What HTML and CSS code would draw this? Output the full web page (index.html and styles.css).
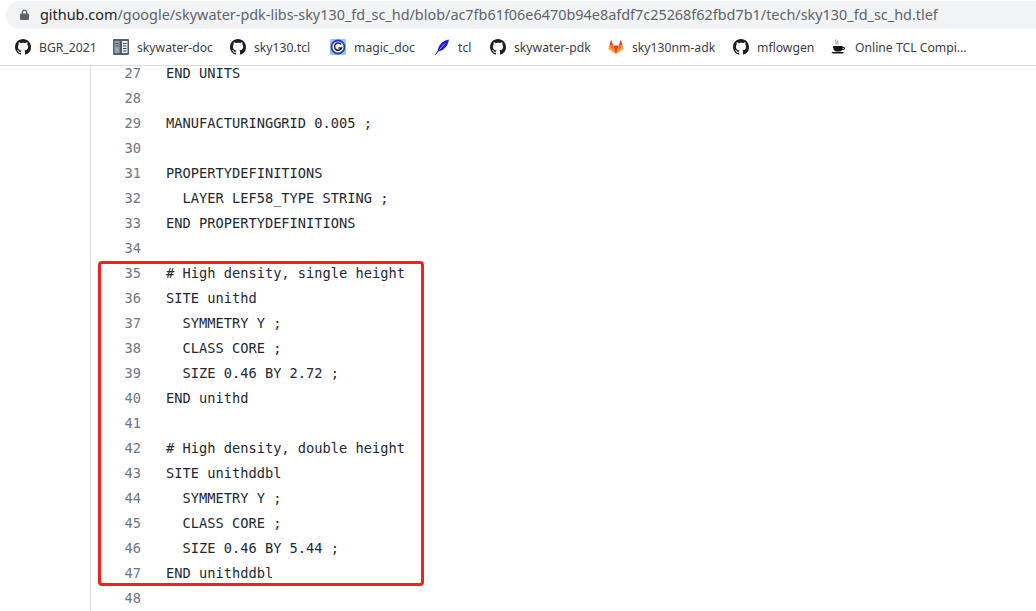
FILE: index.html
```html
<!DOCTYPE html>
<html lang="en">
<head>
<meta charset="utf-8">
<title>sky130_fd_sc_hd.tlef</title>
<link rel="stylesheet" href="styles.css">
</head>
<body>
<svg class="defs" width="0" height="0" aria-hidden="true"><defs>
<symbol id="gh" viewBox="0 0 16 16"><path fill="#1b1f23" d="M8 0C3.58 0 0 3.58 0 8c0 3.54 2.29 6.53 5.47 7.59.4.07.55-.17.55-.38 0-.19-.01-.82-.01-1.49-2.01.37-2.53-.49-2.69-.94-.09-.23-.48-.94-.82-1.13-.28-.15-.68-.52-.01-.53.63-.01 1.08.58 1.23.82.72 1.21 1.87.87 2.33.66.07-.52.28-.87.51-1.07-1.78-.2-3.64-.89-3.64-3.95 0-.87.31-1.59.82-2.15-.08-.2-.36-1.02.08-2.12 0 0 .67-.21 2.2.82.64-.18 1.32-.27 2-.27s1.36.09 2 .27c1.53-1.04 2.2-.82 2.2-.82.44 1.1.16 1.92.08 2.12.51.56.82 1.27.82 2.15 0 3.07-1.87 3.75-3.65 3.95.29.25.54.73.54 1.48 0 1.07-.01 1.93-.01 2.2 0 .21.15.46.55.38A8.01 8.01 0 0 0 16 8c0-4.42-3.58-8-8-8z"/></symbol>
</defs></svg>
<header class="chrome">
  <div class="omnibox">
    <svg class="lock" viewBox="0 0 10 12"><path fill="#5f6368" d="M2 5V3.4a3 3 0 0 1 6 0V5h1a1 1 0 0 1 1 1v5a1 1 0 0 1-1 1H1a1 1 0 0 1-1-1V6a1 1 0 0 1 1-1zm1.300 0h3.400V3.400a1.700 1.700 0 0 0-3.400 0z"/></svg>
    <span class="url"><span class="host">github.com</span>/google/skywater-pdk-libs-sky130_fd_sc_hd/blob/ac7fb61f06e6470b94e8afdf7c25268f62fbd7b1/tech/sky130_fd_sc_hd.tlef</span>
  </div>
  <nav class="bookmarks">
    <a class="mark m-bgr"><svg class="ico"><use href="#gh"/></svg>BGR_2021</a>
    <a class="mark m-doc"><svg class="ico" viewBox="0 0 16 16"><rect width="16" height="16" rx="1" fill="#4f5f6c"/><rect x="1.500" y="2" width="5" height="12" fill="#93a5b3"/><rect x="9" y="2" width="5.500" height="12" fill="#eef1f3"/><path d="M10 4.500h3.500M10 7h3.500M10 9.500h3.500M10 12h3.500M2.500 4.500h3M2.500 7h3" stroke="#3b4853" stroke-width="1.100"/></svg>skywater-doc</a>
    <a class="mark m-tcl"><svg class="ico"><use href="#gh"/></svg>sky130.tcl</a>
    <a class="mark m-magic"><svg class="ico" viewBox="0 0 16 16"><rect width="16" height="16" rx="1" fill="#9fc3e8"/><circle cx="8" cy="8" r="6.500" fill="#f4f4f4" stroke="#1c3fc4" stroke-width="1.800"/><path d="M11 5.500A3.600 3.600 0 1 0 11.500 9H8.500" fill="none" stroke="#222" stroke-width="1.500"/></svg>magic_doc</a>
    <a class="mark m-feather"><svg class="ico" viewBox="0 0 16 16"><path fill="#1a1ae0" d="M15 .5c-4 .5-7.500 2.500-9.500 6-1 1.800-1.500 3.500-1.700 5L1 15.500l.7.500 2.900-3.700c1.700-.2 3.600-.9 5.200-2.300C12.800 7.500 14.500 4 15 .5z"/><path d="M5.500 10.500 11 4.500" stroke="#fff" stroke-width=".6"/></svg>tcl</a>
    <a class="mark m-pdk"><svg class="ico"><use href="#gh"/></svg>skywater-pdk</a>
    <a class="mark m-adk"><svg class="ico" viewBox="0 0 16 16"><path fill="#e24329" d="M8 15.200 5.200 6.500h5.600z"/><path fill="#fc6d26" d="M8 15.200 5.200 6.500H1.300zM8 15.200l2.800-8.700h3.900z"/><path fill="#fca326" d="M1.300 6.500.4 9.300c-.1.300 0 .5.200.7L8 15.200zM14.700 6.500l.9 2.800c.1.300 0 .5-.2.700L8 15.200z"/><path fill="#e24329" d="M1.300 6.500h3.900L3.500 1.300c-.1-.3-.5-.3-.6 0zM14.700 6.500h-3.900l1.700-5.200c.1-.3.500-.3.600 0z"/></svg>sky130nm-adk</a>
    <a class="mark m-flow"><svg class="ico"><use href="#gh"/></svg>mflowgen</a>
    <a class="mark m-online"><svg class="ico" viewBox="0 0 16 16"><path d="M5 .5c-1.500 1.500 1 2.500-.3 5M7 1.500c-1 1 .6 2-.2 4" fill="none" stroke="#777" stroke-width=".9"/><path fill="#111" d="M2 7h9.500v1h1.300c1.700 0 1.700 3-.3 3h-1.500c-.7 1-1.500 1.500-2.400 1.500H5.500C3.500 12.500 2 10 2 7zM11.500 9v1h1c.6 0 .6-1 0-1z"/><path fill="#111" d="M.5 13H13c-.5 1-1.500 1.500-2.500 1.500H3C2 14.500 1 14 .5 13z"/></svg>Online TCL Compi...</a>
  </nav>
</header>
<main class="page">
  <div class="blob">
    <div class="lines">
      <div class="row"><span class="num">27</span><span class="code">END UNITS</span></div>
      <div class="row"><span class="num">28</span><span class="code"></span></div>
      <div class="row"><span class="num">29</span><span class="code">MANUFACTURINGGRID 0.005 ;</span></div>
      <div class="row"><span class="num">30</span><span class="code"></span></div>
      <div class="row"><span class="num">31</span><span class="code">PROPERTYDEFINITIONS</span></div>
      <div class="row"><span class="num">32</span><span class="code">  LAYER LEF58_TYPE STRING ;</span></div>
      <div class="row"><span class="num">33</span><span class="code">END PROPERTYDEFINITIONS</span></div>
      <div class="row"><span class="num">34</span><span class="code"></span></div>
      <div class="row"><span class="num">35</span><span class="code"># High density, single height</span></div>
      <div class="row"><span class="num">36</span><span class="code">SITE unithd</span></div>
      <div class="row"><span class="num">37</span><span class="code">  SYMMETRY Y ;</span></div>
      <div class="row"><span class="num">38</span><span class="code">  CLASS CORE ;</span></div>
      <div class="row"><span class="num">39</span><span class="code">  SIZE 0.46 BY 2.72 ;</span></div>
      <div class="row"><span class="num">40</span><span class="code">END unithd</span></div>
      <div class="row"><span class="num">41</span><span class="code"></span></div>
      <div class="row"><span class="num">42</span><span class="code"># High density, double height</span></div>
      <div class="row"><span class="num">43</span><span class="code">SITE unithddbl</span></div>
      <div class="row"><span class="num">44</span><span class="code">  SYMMETRY Y ;</span></div>
      <div class="row"><span class="num">45</span><span class="code">  CLASS CORE ;</span></div>
      <div class="row"><span class="num">46</span><span class="code">  SIZE 0.46 BY 5.44 ;</span></div>
      <div class="row"><span class="num">47</span><span class="code">END unithddbl</span></div>
      <div class="row"><span class="num">48</span><span class="code"></span></div>
    </div>
    <div class="highlight"></div>
  </div>
</main>
</body>
</html>
```

FILE: styles.css
```css
html, body {
  margin: 0;
  padding: 0;
  width: 1036px;
  height: 611px;
  overflow: hidden;
  background: #fff;
}
.defs { position: absolute; }
.chrome {
  border-bottom: 1px solid #dadce0;
  padding: 1px 0 0 6px;
}
.omnibox {
  height: 28px;
  display: flex;
  align-items: center;
  background: #f1f3f4;
  border-radius: 14px 0 0 14px;
  padding-left: 14px;
}
.lock {
  width: 9px;
  height: 11px;
  flex: none;
  margin: 0 11px 1px 0;
}
.url {
  font: 14.42px "Noto Sans", "Open Sans", sans-serif;
  color: #5f6368;
  white-space: nowrap;
  padding-bottom: 2px;
}
.host { color: #202124; }
.bookmarks {
  display: flex;
  align-items: center;
  height: 36px;
  margin-left: 9px;
}
.mark {
  display: flex;
  align-items: center;
  flex: none;
  font: 12.2px "Noto Sans", "Open Sans", sans-serif;
  color: #3c4043;
  white-space: nowrap;
}
.ico { width: 16px; height: 16px; margin-right: 8px; flex: none; }
.m-bgr { width: 98px; }
.m-doc { width: 117px; }
.m-tcl { width: 100px; }
.m-magic { width: 104px; }
.m-feather { width: 56px; }
.m-pdk { width: 118px; }
.m-adk { width: 125px; }
.m-flow { width: 98px; }
.page { padding-left: 90px; }
.blob {
  position: relative;
  height: 545px;
  border-left: 1px solid #d8dee4;
  overflow: hidden;
}
.lines { margin-top: -5px; }
.row {
  display: flex;
  height: 25px;
  font: 13.7px/25px "DejaVu Sans Mono", "Liberation Mono", monospace;
}
.num {
  width: 50px;
  text-align: right;
  color: #6e7781;
  flex: none;
}
.code {
  margin-left: 25px;
  color: #24292f;
  white-space: pre;
}
.highlight {
  position: absolute;
  left: 7px;
  top: 195px;
  width: 320px;
  height: 319px;
  border: 3px solid #f5201c;
  border-radius: 4px;
}
```
